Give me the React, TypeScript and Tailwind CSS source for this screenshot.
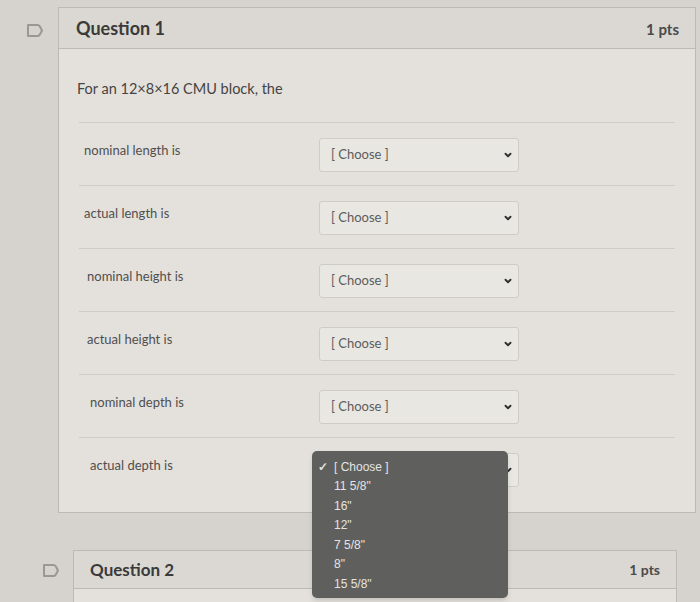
import React from 'react';

const ROWS = [
    'nominal length is',
    'actual length is',
    'nominal height is',
    'actual height is',
    'nominal depth is',
    'actual depth is',
];

const OPTIONS = ['11 5/8"', '16"', '12"', '7 5/8"', '8"', '15 5/8"'];

function Flag() {
    return (
        <svg width="18" height="15" viewBox="0 0 18 15" fill="none" stroke="#9a9893" strokeWidth="2" strokeLinejoin="round">
            <path d="M2 2h9.5c1 0 1.6.4 2.1 1.1L16 7.5l-2.4 4.4c-.5.7-1.1 1.1-2.1 1.1H2z" />
        </svg>
    );
}

function Chevron() {
    return (
        <svg width="10" height="10" viewBox="0 0 24 24" fill="none" stroke="#2f2f2f" strokeWidth="4.5" strokeLinecap="round" strokeLinejoin="round">
            <path d="m6 9 6 6 6-6" />
        </svg>
    );
}

function Select({ covered }: { covered?: boolean }) {
    return (
        <div className="flex h-[34px] w-[200px] items-center justify-between rounded-[3px] border border-[#cfccc6] bg-[#e9e7e2] pl-[11px] pr-[5px]">
            {covered ? <span /> : <span className="text-[13px] text-[#5c5c5c]">[ Choose ]</span>}
            <Chevron />
        </div>
    );
}

export default function App() {
    return (
        <div className="relative h-[602px] w-[700px] overflow-hidden bg-[#d6d3ce] font-['Lato',sans-serif]">
            {/* Question 1 */}
            <div className="flex items-start pt-[7px]">
                <div className="mt-[16px] ml-[26px] mr-[14px]">
                    <Flag />
                </div>
                <div className="w-[638px] border border-[#bdbab5] bg-[#e4e1dc]">
                    <div className="flex h-[41px] items-center justify-between border-b border-[#bdbab5] bg-[#dbd8d3] pl-[17px] pr-[16px]">
                        <h2 className="text-[18px] font-bold text-[#3a3a3a]">Question 1</h2>
                        <span className="mt-[2px] text-[15px] font-bold text-[#4a4a4a]">1 pts</span>
                    </div>
                    <div className="px-[20px] pb-[12px]">
                        <p className="-ml-[2px] pt-[29px] pb-[22px] text-[14.5px] text-[#444]">For an 12×8×16 CMU block, the</p>
                        {ROWS.map((label, i) => (
                            <div key={label} className="flex h-[63px] items-start border-t border-[#cfccc6] pt-[15px]">
                                <span className={`mt-[3px] w-[240px] text-[13px] text-[#4f4f4f] ${i < 2 ? 'pl-[5px]' : i < 4 ? 'pl-[8px]' : 'pl-[11px]'}`}>{label}</span>
                                <Select covered={i === ROWS.length - 1} />
                            </div>
                        ))}
                    </div>
                </div>
            </div>

            {/* Question 2 */}
            <div className="mt-[37px] flex items-start">
                <div className="mt-[13px] ml-[42px] mr-[13px]">
                    <Flag />
                </div>
                <div className="w-[604px] border border-[#bdbab5] bg-[#e4e1dc]">
                    <div className="flex h-[38px] items-center justify-between border-b border-[#bdbab5] bg-[#dbd8d3] pl-[16px] pr-[16px]">
                        <h2 className="text-[17px] font-bold text-[#3a3a3a]">Question 2</h2>
                        <span className="text-[14px] font-bold text-[#4a4a4a]">1 pts</span>
                    </div>
                    <div className="h-[20px]" />
                </div>
            </div>

            {/* open select menu */}
            <div className="absolute left-[312px] top-[451px] h-[147px] w-[196px] rounded-[5px] bg-[#5f5f5d] pt-[6px] font-['Liberation_Sans',Arial,sans-serif] text-[12px] text-[#e4e4e4] shadow-md">
                <div className="flex h-[19.5px] items-center pl-[6px]">
                    <span className="w-[16px] text-[12px] font-bold">✓</span>
                    <span>[ Choose ]</span>
                </div>
                {OPTIONS.map(o => (
                    <div key={o} className="flex h-[19.5px] items-center pl-[22px]">{o}</div>
                ))}
            </div>
        </div>
    );
}
